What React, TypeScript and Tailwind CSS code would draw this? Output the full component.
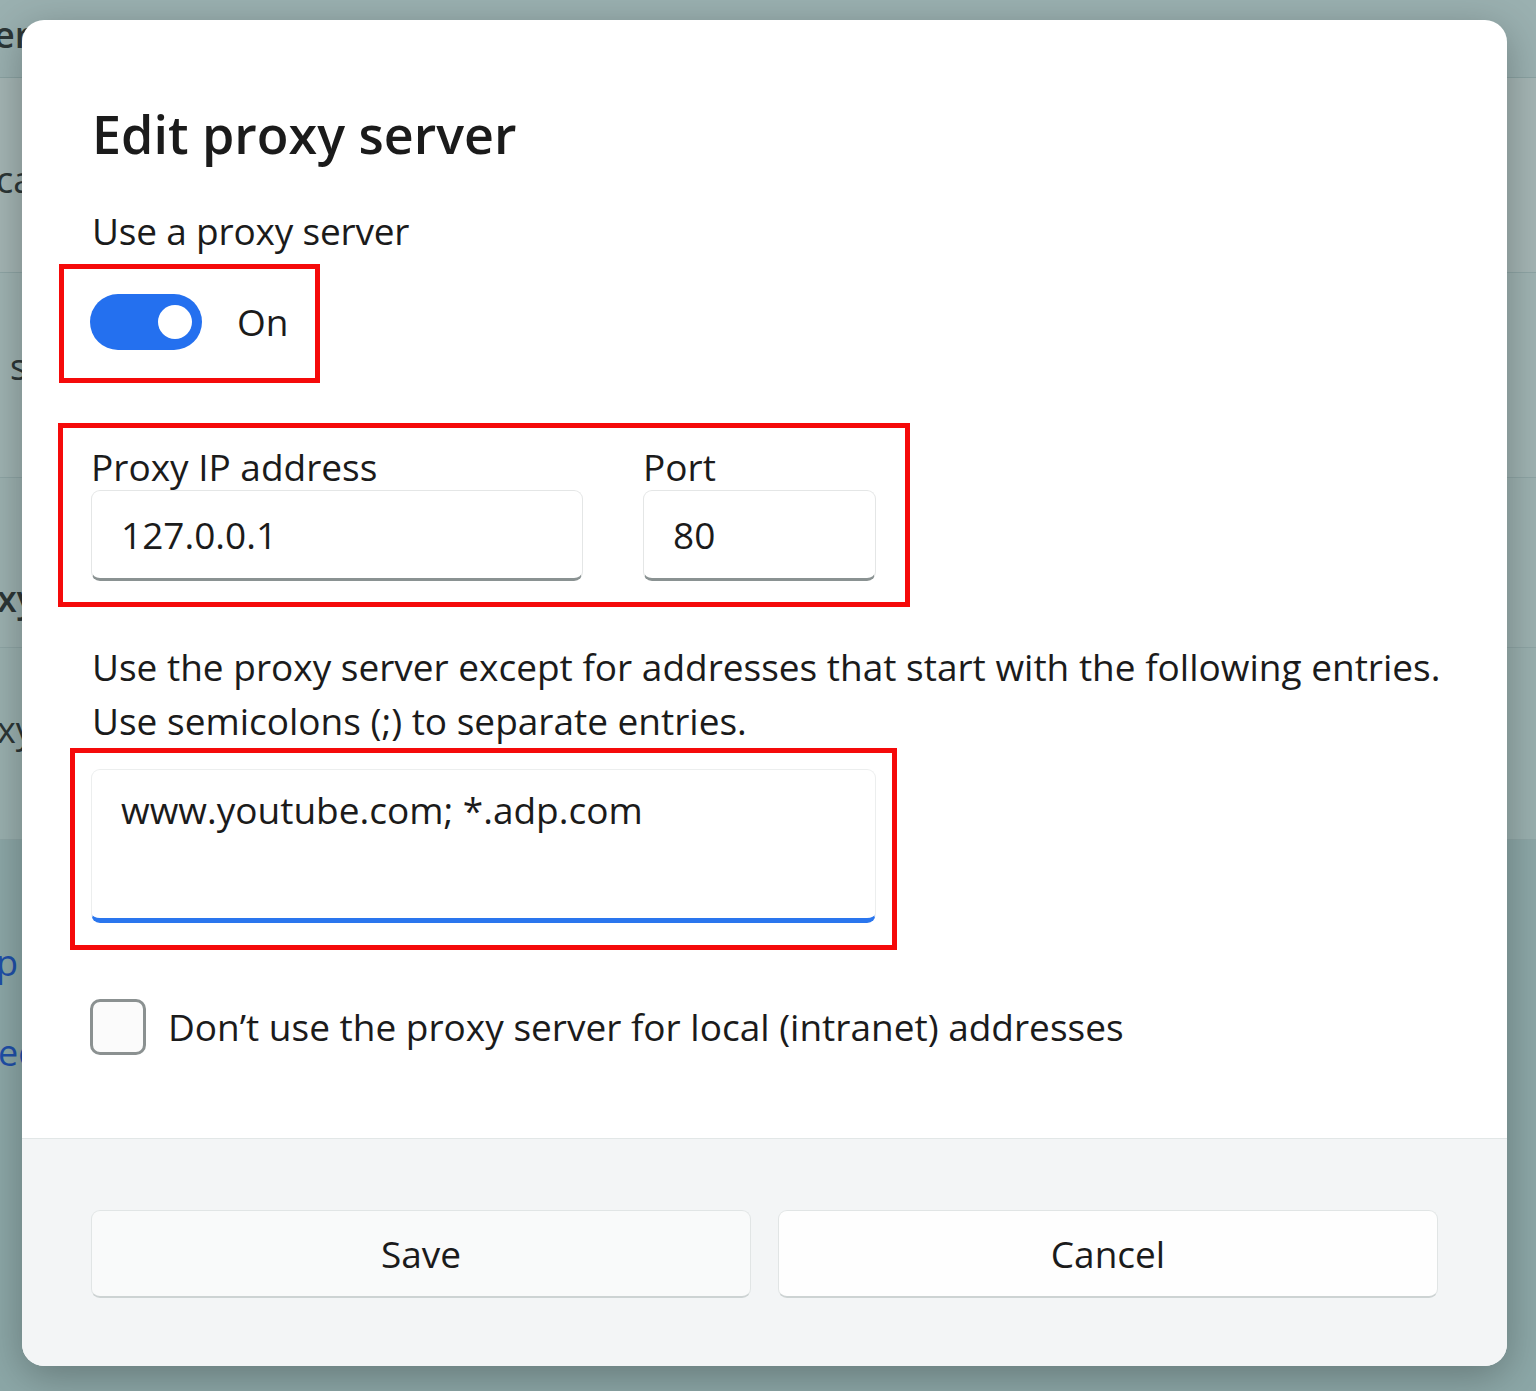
import React from "react";

const font = { fontFamily: '"Open Sans", "Noto Sans", sans-serif' };

const BackgroundPage = () => (
  <div className="absolute inset-0 flex flex-col bg-[#8ca7a7] text-[36px] text-[#2c3636]">
    <div className="h-[78px] flex items-center bg-[#9ab0b0] border-b border-[#8aa2a2]">
      <span className="-ml-[6px] pb-[8px] font-semibold">erc</span>
    </div>
    <div className="h-[195px] flex items-center bg-[#a4b5b4] border-b border-[#8ea5a5]">
      <span className="-ml-[4px] pt-[10px]">ca</span>
    </div>
    <div className="h-[205px] flex items-center bg-[#9fb3b2] border-b border-[#8ea5a5]">
      <span className="ml-[10px] -mt-[16px]">s</span>
    </div>
    <div className="h-[170px] flex items-center bg-[#9cb1b0] border-b border-[#8ea5a5]">
      <span className="-ml-[3px] pt-[72px] font-semibold">xy</span>
    </div>
    <div className="h-[192px] flex items-center bg-[#9ab0af] border-b border-[#8ea5a5]">
      <span className="-ml-[3px] -mt-[28px]">xy</span>
    </div>
    <div className="flex flex-col pt-[98px] gap-[40px] text-[#1f4fa8]">
      <span className="-ml-[4px] leading-[50px]">p</span>
      <span className="-ml-[2px] leading-[50px]">ec</span>
    </div>
  </div>
);

const Toggle = () => (
  <div className="w-[112px] h-[56px] rounded-full bg-[#2470ef] flex items-center justify-end pr-[10px]">
    <div className="w-[34px] h-[34px] rounded-full bg-white" />
  </div>
);

export default function App() {
  return (
    <div className="relative w-[1536px] h-[1391px] overflow-hidden" style={font}>
      <BackgroundPage />

      {/* dialog */}
      <div className="absolute left-[22px] top-[20px] w-[1485px] h-[1346px] rounded-[22px] bg-white overflow-hidden flex flex-col shadow-[0_10px_40px_rgba(0,0,0,0.28)] text-[#1b1b1b]">
        <div className="flex-1 flex flex-col pl-[70px] pt-[84px]">
          <h1 className="text-[52px] leading-[60px] font-semibold">Edit proxy server</h1>
          <p className="mt-[43px] text-[37px] leading-[48px] tracking-[-0.005em]">Use a proxy server</p>

          <div className="mt-[9px] -ml-[33px] w-[261px] h-[119px] border-[5px] border-[#f50a0a] flex items-center pl-[26px] pb-[4px] gap-[35px]">
            <Toggle />
            <span className="text-[37px] leading-[48px]">On</span>
          </div>

          <div className="mt-[40px] -ml-[34px] w-[852px] h-[184px] border-[5px] border-[#f50a0a] flex gap-[60px] pl-[28px] pt-[16px]">
            <div className="flex flex-col w-[492px]">
              <span className="text-[37px] leading-[46px]">Proxy IP address</span>
              <div className="h-[91px] rounded-[9px] border border-[#e4e6e6] border-b-[3px] border-b-[#8a9292] flex items-center pl-[29px] text-[37px]">
                127.0.0.1
              </div>
            </div>
            <div className="flex flex-col w-[233px]">
              <span className="text-[37px] leading-[46px]">Port</span>
              <div className="h-[91px] rounded-[9px] border border-[#e4e6e6] border-b-[3px] border-b-[#8a9292] flex items-center pl-[29px] text-[37px]">
                80
              </div>
            </div>
          </div>

          <p className="mt-[33px] text-[37px] leading-[54px]">
            Use the proxy server except for addresses that start with the following entries.
            <br />
            Use semicolons (;) to separate entries.
          </p>

          <div className="-ml-[22px] w-[827px] h-[202px] border-[5px] border-[#f50a0a] px-[16px] pt-[16px]">
            <div className="h-[154px] rounded-[9px] border border-[#eceeee] border-b-[5px] border-b-[#2a76ee] pl-[29px] pt-[16px] text-[37px] leading-[48px]">
              www.youtube.com; *.adp.com
            </div>
          </div>

          <div className="mt-[49px] -ml-[2px] flex items-center gap-[22px]">
            <div className="w-[56px] h-[56px] rounded-[10px] border-[3px] border-[#8b9191] bg-[#fbfbfb]" />
            <span className="text-[37px] leading-[48px]">Don’t use the proxy server for local (intranet) addresses</span>
          </div>
        </div>

        {/* footer */}
        <div className="h-[228px] bg-[#f3f5f6] border-t border-[#e2e7e7] flex gap-[27px] px-[69px] pt-[71px]">
          <button className="flex-1 h-[88px] rounded-[9px] bg-[#f9fafa] border border-[#e1e5e5] border-b-[2px] border-b-[#cdd3d3] text-[37px] text-[#1b1b1b]">
            Save
          </button>
          <button className="flex-1 h-[88px] rounded-[9px] bg-[#fefefe] border border-[#e1e5e5] border-b-[2px] border-b-[#cdd3d3] text-[37px] text-[#1b1b1b]">
            Cancel
          </button>
        </div>
      </div>
    </div>
  );
}
